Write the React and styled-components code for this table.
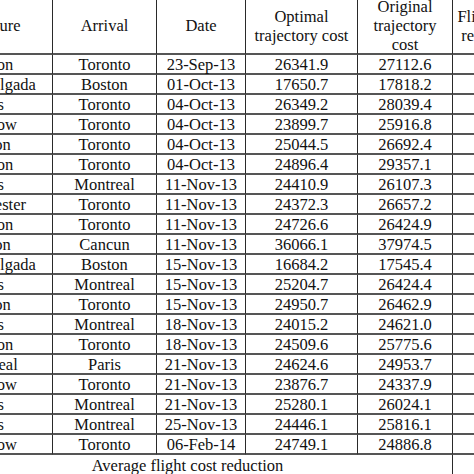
import React from "react";
import styled, { createGlobalStyle } from "styled-components";

const Global = createGlobalStyle`
  html, body { margin: 0; padding: 0; background: #fff; }
  body { width: 474px; height: 474px; overflow: hidden; }
`;

const COLS = "130px 104px 89px 112px 95px 80px";

const Frame = styled.div`
  width: 474px;
  height: 474px;
  overflow: hidden;
  background: #fff;
  font-family: "Liberation Serif", "Times New Roman", serif;
  font-size: 16.5px;
  color: #111;
`;

const Table = styled.div`
  margin-left: -77px;
  margin-top: -2px;
  width: 610px;
`;

const Row = styled.div`
  display: grid;
  grid-template-columns: ${COLS};
`;

const HeadCell = styled.div`
  box-sizing: border-box;
  height: 57px;
  padding: 0 4px;
  display: flex;
  align-items: center;
  justify-content: center;
  text-align: center;
  line-height: 19px;
  border-right: 1px solid #2a2a2a;
  border-bottom: 2px solid #555;
`;

const Cell = styled.div`
  box-sizing: border-box;
  height: 20px;
  line-height: 19px;
  text-align: center;
  white-space: nowrap;
  border-right: 1px solid #2a2a2a;
  border-bottom: 2px solid #555;
`;

const FootRow = styled.div`
  display: grid;
  grid-template-columns: 530px 80px;
`;

const FootCell = styled.div`
  box-sizing: border-box;
  height: 22px;
  line-height: 21px;
  text-align: center;
  border-right: ${(p) => (p.$last ? "0" : "1px solid #2a2a2a")};
`;

const data = [
  ["London", "Toronto", "23-Sep-13", "26341.9", "27112.6"],
  ["Ponta Delgada", "Boston", "01-Oct-13", "17650.7", "17818.2"],
  ["Paris", "Toronto", "04-Oct-13", "26349.2", "28039.4"],
  ["Glasgow", "Toronto", "04-Oct-13", "23899.7", "25916.8"],
  ["Boston", "Toronto", "04-Oct-13", "25044.5", "26692.4"],
  ["London", "Toronto", "04-Oct-13", "24896.4", "29357.1"],
  ["Paris", "Montreal", "11-Nov-13", "24410.9", "26107.3"],
  ["Manchester", "Toronto", "11-Nov-13", "24372.3", "26657.2"],
  ["London", "Toronto", "11-Nov-13", "24726.6", "26424.9"],
  ["Boston", "Cancun", "11-Nov-13", "36066.1", "37974.5"],
  ["Ponta Delgada", "Boston", "15-Nov-13", "16684.2", "17545.4"],
  ["Paris", "Montreal", "15-Nov-13", "25204.7", "26424.4"],
  ["Boston", "Toronto", "15-Nov-13", "24950.7", "26462.9"],
  ["Paris", "Montreal", "18-Nov-13", "24015.2", "24621.0"],
  ["London", "Toronto", "18-Nov-13", "24509.6", "25775.6"],
  ["Montreal", "Paris", "21-Nov-13", "24624.6", "24953.7"],
  ["Glasgow", "Toronto", "21-Nov-13", "23876.7", "24337.9"],
  ["Paris", "Montreal", "21-Nov-13", "25280.1", "26024.1"],
  ["Paris", "Montreal", "25-Nov-13", "24446.1", "25816.1"],
  ["Glasgow", "Toronto", "06-Feb-14", "24749.1", "24886.8"],
];

const reduction = (opt, orig) =>
  (((parseFloat(orig) - parseFloat(opt)) / parseFloat(orig)) * 100).toFixed(2);

const avg = (
  data.reduce((s, r) => s + parseFloat(reduction(r[3], r[4])), 0) / data.length
).toFixed(2);

export default function App() {
  return (
    <Frame>
      <Global />
      <Table>
        <Row>
          <HeadCell>Departure</HeadCell>
          <HeadCell>Arrival</HeadCell>
          <HeadCell>Date</HeadCell>
          <HeadCell>Optimal trajectory cost</HeadCell>
          <HeadCell>Original trajectory cost</HeadCell>
          <HeadCell>Flight cost reduction</HeadCell>
        </Row>
        {data.map((r, i) => (
          <Row key={i}>
            {r.map((c, j) => (
              <Cell key={j}>{c}</Cell>
            ))}
            <Cell>{reduction(r[3], r[4])}</Cell>
          </Row>
        ))}
        <FootRow>
          <FootCell>Average flight cost reduction</FootCell>
          <FootCell $last>{avg}</FootCell>
        </FootRow>
      </Table>
    </Frame>
  );
}
